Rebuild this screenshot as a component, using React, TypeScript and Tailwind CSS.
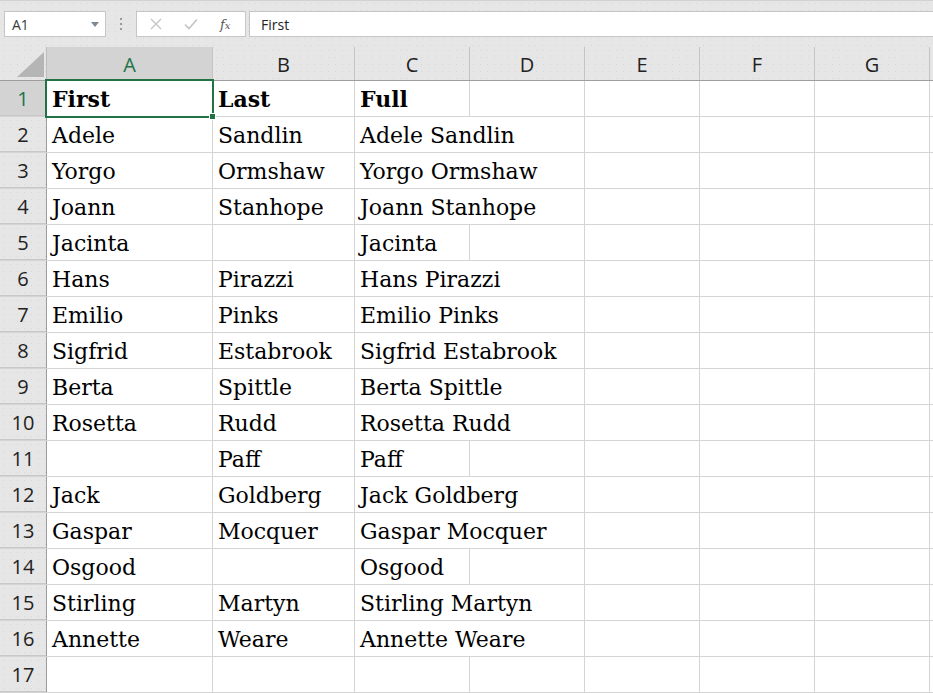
import React from "react";

const COLS: { l: string; w: number }[] = [
  { l: "A", w: 166 },
  { l: "B", w: 142 },
  { l: "C", w: 115 },
  { l: "D", w: 115 },
  { l: "E", w: 115 },
  { l: "F", w: 115 },
  { l: "G", w: 115 },
  { l: "", w: 115 },
];

const DATA: [string, string, string][] = [
  ["First", "Last", "Full"],
  ["Adele", "Sandlin", "Adele Sandlin"],
  ["Yorgo", "Ormshaw", "Yorgo Ormshaw"],
  ["Joann", "Stanhope", "Joann Stanhope"],
  ["Jacinta", "", "Jacinta"],
  ["Hans", "Pirazzi", "Hans Pirazzi"],
  ["Emilio", "Pinks", "Emilio Pinks"],
  ["Sigfrid", "Estabrook", "Sigfrid Estabrook"],
  ["Berta", "Spittle", "Berta Spittle"],
  ["Rosetta", "Rudd", "Rosetta Rudd"],
  ["", "Paff", "Paff"],
  ["Jack", "Goldberg", "Jack Goldberg"],
  ["Gaspar", "Mocquer", "Gaspar Mocquer"],
  ["Osgood", "", "Osgood"],
  ["Stirling", "Martyn", "Stirling Martyn"],
  ["Annette", "Weare", "Annette Weare"],
  ["", "", ""],
];

const SHORT = new Set(["", "Full", "Jacinta", "Paff", "Osgood"]);

const dots =
  "bg-[radial-gradient(circle,#d6d6d6_0.8px,transparent_1px)] bg-[length:7px_7px]";

const cellFont = "font-['DejaVu_Serif',serif] text-[22px] text-black";
const hdrFont = "font-['Open_Sans',sans-serif] text-[20px]";

function Cell({
  w,
  text,
  bold,
  noBorder,
}: {
  w: number;
  text: string;
  bold?: boolean;
  noBorder?: boolean;
}) {
  return (
    <div
      className={`h-full shrink-0 overflow-visible whitespace-nowrap pl-[5px] pt-[1px] leading-[35px] ${cellFont} ${
        bold ? "font-bold" : ""
      } ${noBorder ? "" : "border-r border-[#d4d4d4]"}`}
      style={{ width: w }}
    >
      {text}
    </div>
  );
}

export default function App() {
  return (
    <div className="relative h-[693px] w-[933px] overflow-hidden bg-white">
      {/* top formula area */}
      <div className={`relative h-[47px] bg-[#e6e6e6] ${dots}`}>
        <div className="h-[1px] bg-[#d2d2d2]" />
        <div className="flex h-[46px] items-start pt-[10px]">
          {/* name box */}
          <div className="ml-[4px] flex h-[26px] w-[102px] items-center justify-between border border-[#c6c6c6] bg-white pl-[7px] pr-[6px]">
            <span className="font-['Open_Sans',sans-serif] text-[14px] text-[#3a3a3a]">
              A1
            </span>
            <svg width="8" height="5" viewBox="0 0 8 5">
              <path d="M0 0 L8 0 L4 5 Z" fill="#7d8a96" />
            </svg>
          </div>
          {/* separator dots */}
          <div className="ml-[14px] mt-[7px] flex flex-col gap-[3px]">
            <div className="h-[2px] w-[2px] bg-[#9a9a9a]" />
            <div className="h-[2px] w-[2px] bg-[#9a9a9a]" />
            <div className="h-[2px] w-[2px] bg-[#9a9a9a]" />
          </div>
          {/* fx box */}
          <div className="ml-[14px] flex h-[26px] w-[110px] items-center border border-[#c6c6c6] bg-white">
            <svg className="ml-[13px]" width="12" height="12" viewBox="0 0 12 12">
              <path
                d="M1 1 L11 11 M11 1 L1 11"
                stroke="#c4c4c4"
                strokeWidth="1.3"
                fill="none"
              />
            </svg>
            <svg className="ml-[22px]" width="14" height="12" viewBox="0 0 14 12">
              <path
                d="M1 6.5 L5 10.5 L13 1.5"
                stroke="#c4c4c4"
                strokeWidth="1.6"
                fill="none"
              />
            </svg>
            <span className="ml-[22px] font-['DejaVu_Serif',serif] text-[13px] italic leading-none text-[#555]">
              f
              <span className="text-[10px]">x</span>
            </span>
          </div>
          {/* formula input */}
          <div className="ml-[3px] flex h-[26px] flex-1 items-center border border-r-0 border-[#c6c6c6] bg-white pl-[11px]">
            <span className="font-['Open_Sans',sans-serif] text-[14px] text-[#222]">
              First
            </span>
          </div>
        </div>
      </div>

      {/* column header row */}
      <div className="flex h-[34px] border-b border-[#9e9e9e]">
        <div
          className={`relative h-full w-[47px] shrink-0 border-r border-[#bdbdbd] bg-[#e6e6e6] ${dots}`}
        >
          <svg
            className="absolute left-[17px] top-[5px]"
            width="27"
            height="25"
            viewBox="0 0 27 25"
          >
            <path d="M0 25 L27 25 L27 0 Z" fill="#b5b5b5" />
          </svg>
        </div>
        {COLS.map((c, i) => (
          <div
            key={i}
            className={`flex h-full shrink-0 items-center justify-center border-r border-[#c4c4c4] pt-[2px] ${hdrFont} ${
              i === 0
                ? "bg-[#d3d3d3] text-[#217346]"
                : `bg-[#e6e6e6] text-[#222] ${dots}`
            }`}
            style={{ width: c.w }}
          >
            {c.l}
          </div>
        ))}
      </div>

      {/* rows */}
      {DATA.map((r, ri) => {
        const overflow = !SHORT.has(r[2]);
        return (
          <div key={ri} className="flex h-[36px] border-b border-[#d4d4d4]">
            <div
              className={`flex h-full w-[47px] shrink-0 items-center justify-center border-r border-[#9e9e9e] pt-[1px] ${hdrFont} ${
                ri === 0
                  ? "bg-[#d3d3d3] text-[#217346]"
                  : `bg-[#e6e6e6] text-[#222] ${dots}`
              }`}
            >
              <div className="flex h-full w-full items-center justify-center border-b border-[#c8c8c8]">
                {ri + 1}
              </div>
            </div>
            <Cell w={166} text={r[0]} bold={ri === 0} />
            <Cell w={142} text={r[1]} bold={ri === 0} />
            {overflow ? (
              <Cell w={230} text={r[2]} />
            ) : (
              <>
                <Cell w={115} text={r[2]} bold={ri === 0} />
                <Cell w={115} text="" />
              </>
            )}
            <Cell w={115} text="" />
            <Cell w={115} text="" />
            <Cell w={115} text="" />
            <Cell w={115} text="" />
          </div>
        );
      })}

      {/* selection overlay */}
      <div className="pointer-events-none absolute left-[45px] top-[79px] h-[39px] w-[169px] border-2 border-[#217346]" />
      <div className="pointer-events-none absolute left-[209px] top-[113px] h-[7px] w-[7px] border border-white bg-[#217346]" />
    </div>
  );
}
